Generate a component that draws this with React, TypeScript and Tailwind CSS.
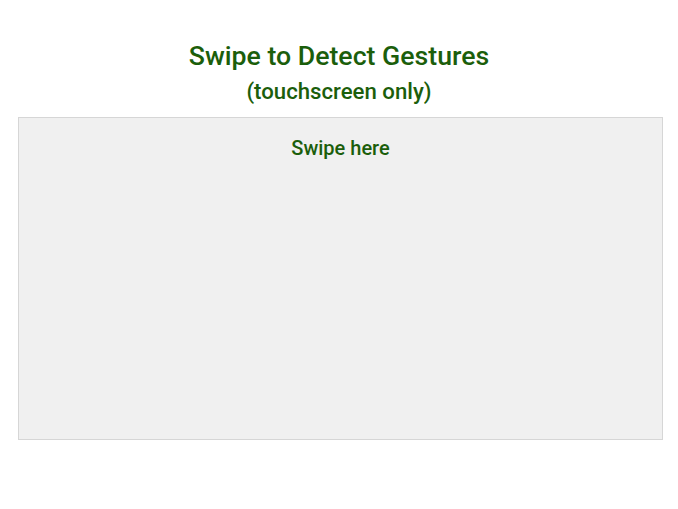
export default function App() {
  return (
    <div className="min-h-screen bg-white text-[#1b5e0b]" style={{ fontFamily: "Roboto, 'Open Sans', sans-serif" }}>
      <div className="flex flex-col items-center pt-[40px]">
        <h1 className="text-[26.7px] leading-[32px] font-medium">Swipe to Detect Gestures</h1>
        <h2 className="text-[22.2px] leading-[28px] mt-[5px] font-medium">(touchscreen only)</h2>
      </div>
      <div className="ml-[18px] mt-[12px] w-[645px] h-[323px] border border-[#d6d6d6] bg-[#f0f0f0] flex justify-center pt-[18px]">
        <span className="text-[20px] leading-[24px] font-medium">Swipe here</span>
      </div>
    </div>
  );
}
